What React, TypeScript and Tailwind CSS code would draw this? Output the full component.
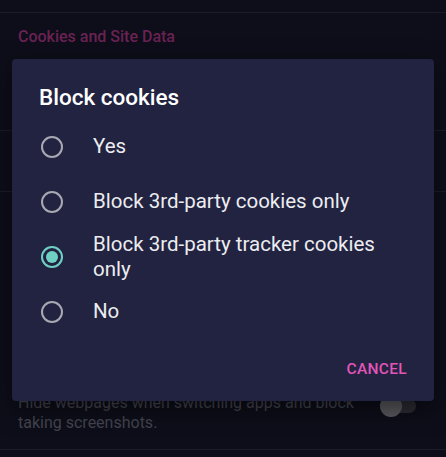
import React from "react";

const options = [
  { label: "Yes", checked: false },
  { label: "Block 3rd-party cookies only", checked: false },
  { label: "Block 3rd-party tracker cookies only", checked: true },
  { label: "No", checked: false },
];

function Radio({ checked }: { checked: boolean }) {
  return (
    <span
      className={`flex h-[22px] w-[22px] shrink-0 items-center justify-center rounded-full border-2 ${
        checked ? "border-[#6fd1c4]" : "border-[#a9a9b3]"
      }`}
    >
      {checked && <span className="h-[12px] w-[12px] rounded-full bg-[#6fd1c4]" />}
    </span>
  );
}

export default function App() {
  return (
    <div
      className="relative h-[457px] w-[446px] overflow-hidden bg-[#0d0e19]"
      style={{ fontFamily: "Roboto, 'Liberation Sans', sans-serif" }}
    >
      {/* settings page behind the dialog */}
      <div className="h-[13px] border-b border-[#1b1c28]" />
      <div className="h-[118px] border-b border-[#1b1c28] px-[18px] pt-[14px]">
        <p className="text-[16px] font-medium leading-[20px] text-[#6a2253]">
          Cookies and Site Data
        </p>
      </div>
      <div className="h-[61px] border-b border-[#1b1c28]" />
      <div className="flex h-[258px] items-end justify-between border-b border-[#1b1c28] px-[18px] pb-[16px]">
        <p className="w-[345px] text-[16px] leading-[20px] text-[#44444f]">
          Hide webpages when switching apps and block taking screenshots.
        </p>
        <div className="relative mb-[20px] mr-[12px] h-[14px] w-[34px] rounded-full bg-[#2b2b33]">
          <span className="absolute -left-[2px] -top-[4px] h-[22px] w-[22px] rounded-full bg-[#5a5a5f]" />
        </div>
      </div>

      {/* dialog */}
      <div className="absolute left-[12px] top-[59px] flex h-[342px] w-[422px] flex-col rounded-[4px] bg-[#212340] shadow-[0_8px_24px_rgba(0,0,0,0.5)]">
        <h2 className="px-[27px] pt-[24px] text-[22.5px] font-medium leading-[28px] text-white">
          Block cookies
        </h2>
        <div className="mt-[8px] flex flex-col">
          {options.map((o) => (
            <div key={o.label} className="flex min-h-[55px] items-center">
              <div className="flex w-[81px] justify-start pl-[29px]">
                <Radio checked={o.checked} />
              </div>
              <span className="w-[295px] text-[20.5px] leading-[25px] text-[#ececf1]">
                {o.label}
              </span>
            </div>
          ))}
        </div>
        <div className="mt-auto flex justify-end px-[19px] pb-[13px]">
          <button className="h-[36px] px-[8px] text-[15.5px] font-medium uppercase tracking-[0.3px] text-[#e255b8]">
            Cancel
          </button>
        </div>
      </div>
    </div>
  );
}
